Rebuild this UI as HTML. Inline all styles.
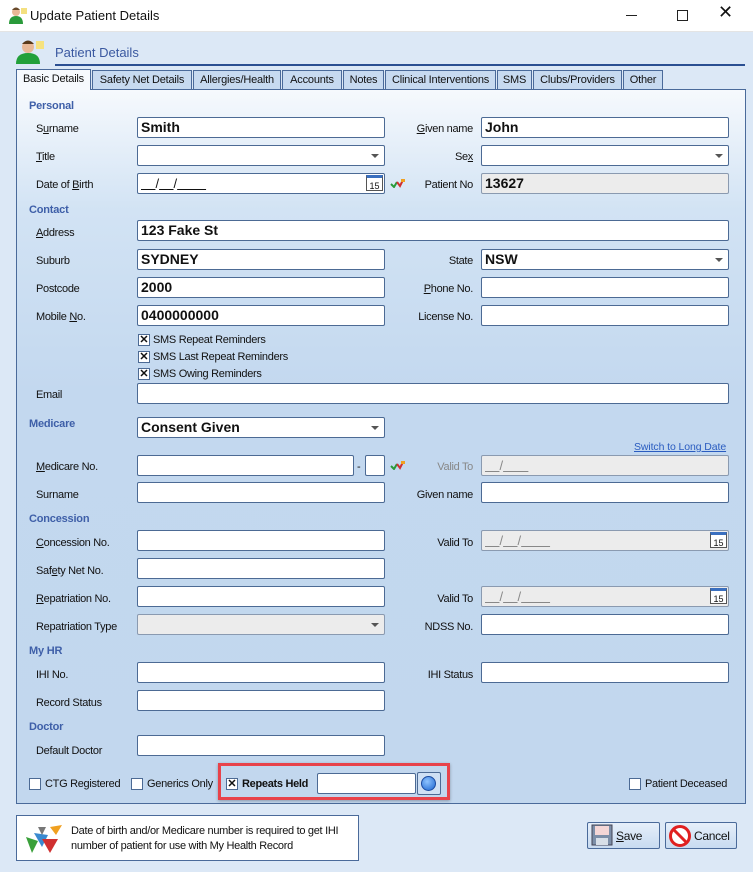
<!DOCTYPE html>
<html><head><meta charset="utf-8"><style>
*{box-sizing:border-box;margin:0;padding:0}
body{width:753px;height:872px;background:#dce8f6;font-family:"Liberation Sans",sans-serif;font-size:11px;color:#111;position:relative;overflow:hidden}
.a{position:absolute}
.title{left:0;top:0;width:753px;height:32px;background:#fff;border-bottom:1px solid #e4e4e4}
.lbl{position:absolute;font-size:11px;letter-spacing:-0.3px;line-height:14px;white-space:nowrap}
.r{text-align:right}
.hdr{position:absolute;color:#3e5fa8;font-weight:bold;font-size:11px;letter-spacing:-0.2px}
.in{position:absolute;height:21px;background:#fff;border:1px solid #4c6a94;border-radius:2px;font-weight:bold;font-size:14px;padding-left:3px;line-height:19px}
.dis{background:#ececec;border-color:#8a9ab0}
.dd:after{content:"";position:absolute;right:5px;top:8px;border-left:4px solid transparent;border-right:4px solid transparent;border-top:4px solid #555}
.tab{position:absolute;top:70px;height:19px;background:#c7daf0;border:1px solid #4a6a9a;border-bottom:none;font-size:11px;letter-spacing:-0.2px;text-align:center;line-height:18px}
.cb{position:absolute;width:12px;height:12px;border:1px solid #4c6a94;background:#fff}
.cbx{background:#fff;font-size:11px;font-weight:bold;line-height:10px;text-align:center}
.cal{position:absolute;width:17px;height:16px;border:1px solid #555;background:#fff;font-size:9px;text-align:center;line-height:17px;border-top:3px solid #3a6fbf}
.date{font-weight:normal;font-size:13px;color:#111}
.dated{color:#888}
</style></head><body>
<div class="a title"></div>
<svg class="a" style="left:8px;top:5px" width="20" height="20"><circle cx="8" cy="7" r="4" fill="#e8b896"/><path d="M4 5 Q8 0 12 5" fill="#6a4a2a"/><path d="M1 19 Q1 11 8 11 Q15 11 15 19Z" fill="#2a9a3a"/><rect x="13" y="3" width="6" height="6" fill="#f4e080"/></svg>
<div class="a" style="left:30px;top:8px;font-size:13px">Update Patient Details</div>
<div class="a" style="left:626px;top:15px;width:11px;height:1px;background:#222"></div>
<div class="a" style="left:677px;top:10px;width:11px;height:11px;border:1px solid #222"></div>
<div class="a" style="left:718px;top:2px;font-size:18px;font-weight:300">✕</div>

<svg class="a" style="left:14px;top:36px" width="32" height="30"><circle cx="14" cy="11" r="6" fill="#e8b896"/><path d="M8 8 Q14 1 20 8" fill="#5a3a1a"/><path d="M2 28 Q2 17 14 17 Q26 17 26 28Z" fill="#22a03a"/><rect x="22" y="5" width="8" height="8" fill="#f6e27e"/></svg>
<div class="a" style="left:55px;top:45px;font-size:13px;color:#3a58a0">Patient Details</div>
<div class="a" style="left:55px;top:64px;width:690px;height:2px;background:#2b4f92"></div>

<div class="a" style="left:16px;top:89px;width:730px;height:715px;border:1px solid #4a6a9a;background:linear-gradient(#f6f9fd 0px,#d2e3f4 120px,#c3d8ef 300px,#c2d7ee 715px)"></div>
<div class="tab" style="left:16px;width:75px;top:69px;height:21px;background:#f6f9fd">Basic Details</div>
<div class="tab" style="left:92px;width:100px">Safety Net Details</div>
<div class="tab" style="left:193px;width:88px">Allergies/Health</div>
<div class="tab" style="left:282px;width:60px">Accounts</div>
<div class="tab" style="left:343px;width:41px">Notes</div>
<div class="tab" style="left:385px;width:111px">Clinical Interventions</div>
<div class="tab" style="left:497px;width:35px">SMS</div>
<div class="tab" style="left:533px;width:89px">Clubs/Providers</div>
<div class="tab" style="left:623px;width:40px">Other</div>

<div class="hdr" style="left:29px;top:100px">Personal</div>
<div class="lbl" style="left:36px;top:122px">S<u>u</u>rname</div><div class="in" style="left:137px;top:117px;width:248px">Smith</div>
<div class="lbl r" style="left:380px;width:93px;top:122px"><u>G</u>iven name</div><div class="in" style="left:481px;top:117px;width:248px">John</div>
<div class="lbl" style="left:36px;top:150px"><u>T</u>itle</div><div class="in dd" style="left:137px;top:145px;width:248px"></div>
<div class="lbl r" style="left:380px;width:93px;top:150px">Se<u>x</u></div><div class="in dd" style="left:481px;top:145px;width:248px"></div>
<div class="lbl" style="left:36px;top:178px">Date of <u>B</u>irth</div><div class="in date" style="left:137px;top:173px;width:248px"><u>&nbsp;&nbsp;&nbsp;&nbsp;</u>/<u>&nbsp;&nbsp;&nbsp;&nbsp;</u>/<u>&nbsp;&nbsp;&nbsp;&nbsp;&nbsp;&nbsp;&nbsp;&nbsp;</u></div>
<div class="cal" style="left:366px;top:175px">15</div>
<svg class="a" style="left:390px;top:178px" width="16" height="10"><path d="M1 6l3 3 3-5" stroke="#2a9a3a" stroke-width="2" fill="none"/><path d="M7 4l3 4 3-6" stroke="#d03030" stroke-width="2" fill="none"/><rect x="11" y="1" width="4" height="3" fill="#f0a020"/></svg>
<div class="lbl r" style="left:380px;width:93px;top:178px">Patient No</div><div class="in dis" style="left:481px;top:173px;width:248px">13627</div>

<div class="hdr" style="left:29px;top:204px">Contact</div>
<div class="lbl" style="left:36px;top:226px"><u>A</u>ddress</div><div class="in" style="left:137px;top:220px;width:592px">123 Fake St</div>
<div class="lbl" style="left:36px;top:254px">Suburb</div><div class="in" style="left:137px;top:249px;width:248px">SYDNEY</div>
<div class="lbl r" style="left:380px;width:93px;top:254px">State</div><div class="in dd" style="left:481px;top:249px;width:248px">NSW</div>
<div class="lbl" style="left:36px;top:282px">Postcode</div><div class="in" style="left:137px;top:277px;width:248px">2000</div>
<div class="lbl r" style="left:380px;width:93px;top:282px"><u>P</u>hone No.</div><div class="in" style="left:481px;top:277px;width:248px"></div>
<div class="lbl" style="left:36px;top:310px">Mobile <u>N</u>o.</div><div class="in" style="left:137px;top:305px;width:248px">0400000000</div>
<div class="lbl r" style="left:380px;width:93px;top:310px">License No.</div><div class="in" style="left:481px;top:305px;width:248px"></div>
<div class="cb cbx" style="left:138px;top:334px">✕</div><div class="lbl" style="left:153px;top:333px">SMS Repeat Reminders</div>
<div class="cb cbx" style="left:138px;top:351px">✕</div><div class="lbl" style="left:153px;top:350px">SMS Last Repeat Reminders</div>
<div class="cb cbx" style="left:138px;top:368px">✕</div><div class="lbl" style="left:153px;top:367px">SMS Owing Reminders</div>
<div class="lbl" style="left:36px;top:388px">Email</div><div class="in" style="left:137px;top:383px;width:592px"></div>

<div class="hdr" style="left:29px;top:418px">Medicare</div>
<div class="in dd" style="left:137px;top:417px;width:248px">Consent Given</div>
<div class="lbl" style="left:634px;top:440px;color:#2a5cc0;text-decoration:underline;font-size:10.5px;letter-spacing:-0.1px">Switch to Long Date</div>
<div class="lbl" style="left:36px;top:460px"><u>M</u>edicare No.</div><div class="in" style="left:137px;top:455px;width:217px"></div>
<div class="lbl" style="left:357px;top:460px">-</div><div class="in" style="left:365px;top:455px;width:20px"></div>
<svg class="a" style="left:390px;top:460px" width="16" height="10"><path d="M1 6l3 3 3-5" stroke="#2a9a3a" stroke-width="2" fill="none"/><path d="M7 4l3 4 3-6" stroke="#d03030" stroke-width="2" fill="none"/><rect x="11" y="1" width="4" height="3" fill="#f0a020"/></svg>
<div class="lbl r" style="left:380px;width:93px;top:460px;color:#888">Valid To</div><div class="in dis date dated" style="left:481px;top:455px;width:248px"><u>&nbsp;&nbsp;&nbsp;&nbsp;</u>/<u>&nbsp;&nbsp;&nbsp;&nbsp;&nbsp;&nbsp;&nbsp;</u></div>
<div class="lbl" style="left:36px;top:488px">Surname</div><div class="in" style="left:137px;top:482px;width:248px"></div>
<div class="lbl r" style="left:380px;width:93px;top:488px">Given name</div><div class="in" style="left:481px;top:482px;width:248px"></div>

<div class="hdr" style="left:29px;top:513px">Concession</div>
<div class="lbl" style="left:36px;top:536px"><u>C</u>oncession No.</div><div class="in" style="left:137px;top:530px;width:248px"></div>
<div class="lbl r" style="left:380px;width:93px;top:536px">Valid To</div><div class="in dis date dated" style="left:481px;top:530px;width:248px"><u>&nbsp;&nbsp;&nbsp;&nbsp;</u>/<u>&nbsp;&nbsp;&nbsp;&nbsp;</u>/<u>&nbsp;&nbsp;&nbsp;&nbsp;&nbsp;&nbsp;&nbsp;&nbsp;</u></div>
<div class="cal" style="left:710px;top:532px">15</div>
<div class="lbl" style="left:36px;top:564px">Saf<u>e</u>ty Net No.</div><div class="in" style="left:137px;top:558px;width:248px"></div>
<div class="lbl" style="left:36px;top:592px"><u>R</u>epatriation No.</div><div class="in" style="left:137px;top:586px;width:248px"></div>
<div class="lbl r" style="left:380px;width:93px;top:592px">Valid To</div><div class="in dis date dated" style="left:481px;top:586px;width:248px"><u>&nbsp;&nbsp;&nbsp;&nbsp;</u>/<u>&nbsp;&nbsp;&nbsp;&nbsp;</u>/<u>&nbsp;&nbsp;&nbsp;&nbsp;&nbsp;&nbsp;&nbsp;&nbsp;</u></div>
<div class="cal" style="left:710px;top:588px">15</div>
<div class="lbl" style="left:36px;top:620px">Repatriation Type</div><div class="in dis dd" style="left:137px;top:614px;width:248px"></div>
<div class="lbl r" style="left:380px;width:93px;top:620px">NDSS No.</div><div class="in" style="left:481px;top:614px;width:248px"></div>

<div class="hdr" style="left:29px;top:645px">My HR</div>
<div class="lbl" style="left:36px;top:668px">IHI No.</div><div class="in" style="left:137px;top:662px;width:248px"></div>
<div class="lbl r" style="left:380px;width:93px;top:668px">IHI Status</div><div class="in" style="left:481px;top:662px;width:248px"></div>
<div class="lbl" style="left:36px;top:696px">Record Status</div><div class="in" style="left:137px;top:690px;width:248px"></div>
<div class="hdr" style="left:29px;top:721px">Doctor</div>
<div class="lbl" style="left:36px;top:744px">Default Doctor</div><div class="in" style="left:137px;top:735px;width:248px"></div>

<div class="cb" style="left:29px;top:778px"></div><div class="lbl" style="left:45px;top:777px">CTG Registered</div>
<div class="cb" style="left:131px;top:778px"></div><div class="lbl" style="left:147px;top:777px">Generics Only</div>
<div class="a" style="left:218px;top:763px;width:232px;height:37px;border:3px solid #e8424a;box-shadow:0 1px 3px rgba(0,0,0,.3)"></div>
<div class="cb cbx" style="left:226px;top:778px">✕</div><div class="lbl" style="left:242px;top:777px;font-weight:bold">Repeats Held</div>
<div class="in" style="left:317px;top:773px;width:99px"></div>
<div class="a" style="left:417px;top:772px;width:24px;height:23px;border:1px solid #4c6a94;background:#cfe0f4;border-radius:2px"></div>
<div class="a" style="left:421px;top:776px;width:15px;height:15px;border-radius:50%;background:radial-gradient(circle at 40% 35%,#8fc4ff,#1a64d0);border:1px solid #1a4aa0"></div>
<div class="cb" style="left:629px;top:778px"></div><div class="lbl" style="left:645px;top:777px">Patient Deceased</div>

<div class="a" style="left:16px;top:815px;width:343px;height:46px;border:1px solid #4a6a9a;background:#fff"></div>
<svg class="a" style="left:24px;top:823px" width="40" height="32"><path d="M2 14l6 16 6-12z" fill="#3aa03a"/><path d="M10 10l8 14 6-12z" fill="#3a8ad0"/><path d="M18 16l8 14 8-14z" fill="#d03030"/><path d="M26 4l6 8 6-10z" fill="#f0a020"/><path d="M14 4l4 8 4-8z" fill="#777"/></svg>
<div class="lbl" style="left:71px;top:824px;font-size:11px">Date of birth and/or Medicare number is required to get IHI</div>
<div class="lbl" style="left:71px;top:839px;font-size:11px">number of patient for use with My Health Record</div>

<div class="a" style="left:587px;top:822px;width:73px;height:27px;border:1px solid #4a6a9a;background:linear-gradient(#e6effa,#c8dbf1);border-radius:2px"></div>
<svg class="a" style="left:591px;top:824px" width="22" height="22"><rect x="1" y="1" width="20" height="20" fill="#7c8ea8" stroke="#445"/><rect x="4" y="2" width="14" height="9" fill="#f4d6d6"/><rect x="5" y="14" width="12" height="7" fill="#d8dfe8"/></svg>
<div class="lbl" style="left:616px;top:829px;font-size:12px"><u>S</u>ave</div>
<div class="a" style="left:665px;top:822px;width:72px;height:27px;border:1px solid #4a6a9a;background:linear-gradient(#e6effa,#c8dbf1);border-radius:2px"></div>
<svg class="a" style="left:668px;top:824px" width="24" height="24"><circle cx="12" cy="12" r="9.5" fill="#fff" stroke="#e02020" stroke-width="3"/><path d="M5.5 5.5L18.5 18.5" stroke="#e02020" stroke-width="3"/></svg>
<div class="lbl" style="left:694px;top:829px;font-size:12px">Cancel</div>
</body></html>
